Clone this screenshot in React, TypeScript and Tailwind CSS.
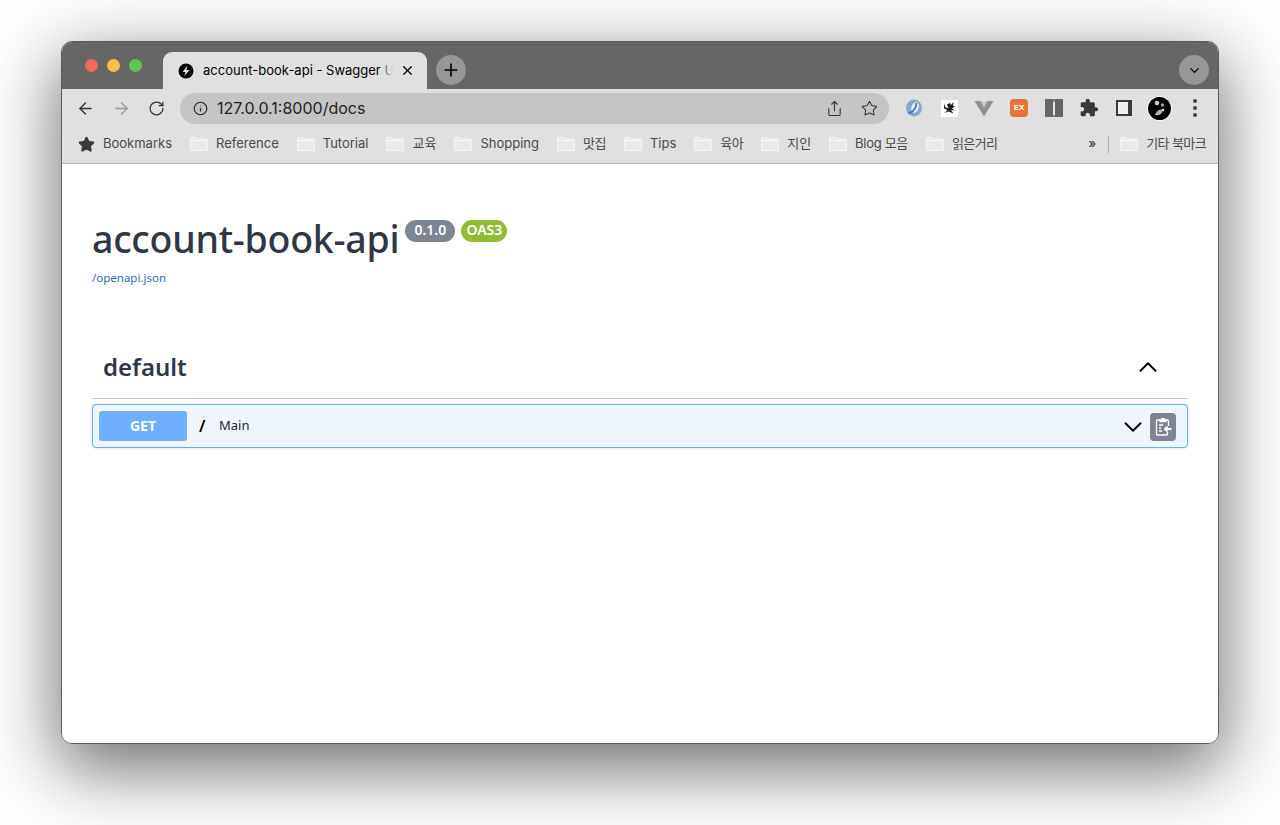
import { ArrowLeft, ArrowRight, ChevronDown, ChevronUp, Info, Plus, RotateCw, Share, Star, X } from "lucide-react"

const bookmarks = [
  { label: "Reference", cls: "" },
  { label: "Tutorial", cls: "" },
  { label: "교육", cls: "" },
  { label: "Shopping", cls: "" },
  { label: "맛집", cls: "tracking-[-0.5px]" },
  { label: "Tips", cls: "" },
  { label: "육아", cls: "tracking-[-0.5px]" },
  { label: "지인", cls: "" },
  { label: "Blog 모음", cls: "tracking-[-0.3px]" },
  { label: "읽은거리", cls: "tracking-[-0.6px]" },
]

function Folder() {
  return (
    <svg width="18" height="14" viewBox="0 0 18 14" className="shrink-0">
      <path d="M.5 12.700V1.300c0-.4.4-.8.8-.8h4.600l1.300 1.500h9.500c.4 0 .8.4.8.8v9.900c0 .4-.4.8-.8.8H1.300c-.4 0-.8-.4-.8-.8z" fill="#e9e9e9" stroke="#f5f5f5" />
      <path d="M1 3.500h16" stroke="#f5f5f5" />
    </svg>
  )
}

function Bookmark({ label, cls }: { label: string; cls?: string }) {
  return (
    <div className="flex items-center gap-2">
      <Folder />
      <span className={cls}>{label}</span>
    </div>
  )
}

function Favicon() {
  return (
    <svg width="16" height="16" viewBox="0 0 16 16" className="shrink-0">
      <circle cx="8" cy="8" r="7.500" fill="#000" />
      <path d="M9.400 2.800 4.600 9h2.800l-1 4.200L11.400 7H8.500z" fill="#e0e0e0" />
    </svg>
  )
}

function Extensions() {
  return (
    <div className="flex items-center gap-[15px] ml-[15px]">
      <svg width="20" height="20" viewBox="0 0 20 20">
        <ellipse cx="10" cy="10" rx="8" ry="8.500" fill="#88a9cf" />
        <ellipse cx="11" cy="9.500" rx="3.500" ry="5.500" fill="#eef2f7" transform="rotate(20 11 9.500)" />
        <path d="M4.500 14.500c3 1 7.500-3 8-9.500" stroke="#3f74b0" strokeWidth="1.800" fill="none" />
      </svg>
      <svg width="20" height="20" viewBox="0 0 20 20">
        <rect x="2" y="2" width="17" height="17" fill="#fff" />
        <path d="M5 5.500l1.500 4 3 .5L8 6.500l3-1.500 1 2 2.500-3-.5 4 2 .5-3 2 3 2-4-.5 2.500 3.500-5-2-4 1.500 3-3-3.500-1.500z" fill="#1f1f1f" />
      </svg>
      <svg width="20" height="20" viewBox="0 0 20 20">
        <path d="M.5 3h6.200L10 8.500 13.300 3h6.200L10 18.500z" fill="#8f8f8f" />
        <path d="M6 3h2.500L10 5.500 11.500 3H14l-4 7z" fill="#c2c2c2" />
      </svg>
      <div className="w-[18px] h-[18px] mx-px rounded-[4px] bg-[#e5733a] text-white text-[8px] font-bold flex items-center justify-center">EX</div>
      <div className="w-[18px] h-[18px] mx-px bg-[#666666] flex items-center justify-center">
        <div className="w-[2px] h-[18px] bg-[#8a8a8a] flex items-center">
          <div className="w-[2px] h-[13px] bg-[#e8e8e8]" />
        </div>
      </div>
      <svg width="20" height="20" viewBox="0 0 24 24" fill="#3a3a3a">
        <path d="M20.500 11H19V7c0-1.100-.9-2-2-2h-4V3.500C13 2.120 11.880 1 10.500 1S8 2.120 8 3.500V5H4c-1.100 0-1.990.9-1.990 2v3.800H3.500c1.490 0 2.700 1.210 2.700 2.700s-1.210 2.700-2.700 2.700H2V20c0 1.100.9 2 2 2h3.800v-1.500c0-1.490 1.210-2.700 2.700-2.700s2.700 1.210 2.700 2.700V22H17c1.100 0 2-.9 2-2v-4h1.500c1.380 0 2.500-1.120 2.500-2.500S21.880 11 20.500 11z" />
      </svg>
      <div className="w-[16px] h-[16px] mx-[2px] border-2 border-r-[4px] border-[#3a3a3a] bg-[#efefef]" />
      <svg width="25" height="25" viewBox="0 0 25 25" className="-mx-[2px]">
        <circle cx="12.500" cy="12.500" r="12.500" fill="#fff" />
        <circle cx="12.500" cy="12.500" r="11.500" fill="#000" />
        <circle cx="10" cy="7" r="2.300" fill="#c9c9c9" />
        <circle cx="15.500" cy="9" r="1.800" fill="#9a9a9a" />
        <path d="M8 19c1-3 3-5 5.500-5.500 1.500 0 2.500 1.500 1.500 3-1 2-4 3.500-7 2.500z" fill="#b5b5b5" />
        <circle cx="16" cy="14" r="1.300" fill="#dddddd" />
      </svg>
      <div className="w-5 flex flex-col items-center gap-[3.500px]">
        <div className="w-[3.500px] h-[3.500px] rounded-full bg-[#444444]" />
        <div className="w-[3.500px] h-[3.500px] rounded-full bg-[#444444]" />
        <div className="w-[3.500px] h-[3.500px] rounded-full bg-[#444444]" />
      </div>
    </div>
  )
}

function Swagger() {
  return (
    <div className="flex-1 bg-white px-[30px] text-[#3b4151] font-['Noto_Sans','Noto_Sans_CJK_KR',sans-serif]">
      <div className="mt-[50px] flex items-start">
        <h1 className="text-[37.500px] leading-[50px] font-medium text-[#2f3646] tracking-[-0.26px]">account-book-api</h1>
        <span className="ml-[6px] mt-[6px] h-[22px] w-[50px] rounded-full bg-[#7d8492] text-white text-[14px] leading-[20px] font-semibold text-center">0.1.0</span>
        <span className="ml-[6px] mt-[6px] h-[22px] w-[46px] rounded-full bg-[#92bb37] text-white text-[14px] leading-[20px] font-semibold text-center">OAS3</span>
      </div>
      <div className="mt-[6px] text-[11.500px] leading-[16px] text-[#2e6bbd]">/openapi.json</div>

      <div className="mt-[51px] h-[62px] border-b border-[#c2c5ca] flex items-center justify-between pl-[11px] pr-[28px]">
        <span className="text-[24px] font-semibold text-[#2f3646] -mt-[2px]">default</span>
        <ChevronUp size={30} strokeWidth={1.500} className="text-black -mr-[3px] -mt-[2px]" />
      </div>
      <div className="mt-[5px] h-[44px] rounded-[4px] border border-[#61affe] bg-[#eff6ff] shadow-[0_0_3px_rgba(0,0,0,0.15)] flex items-center pl-[6px] pr-[11px]">
        <div className="w-[88px] h-[30px] rounded-[3px] bg-[#6fb0fe] text-white text-[14px] font-bold flex items-center justify-center -mt-[1px]">GET</div>
        <span className="ml-[12px] w-[20px] text-[16px] font-semibold text-black -mt-[1px]">/</span>
        <span className="text-[13px] text-[#1f2430] -mt-[1px]">Main</span>
        <ChevronDown size={30} strokeWidth={1.500} className="text-black ml-auto -mr-[1px] mt-[1px]" />
        <div className="ml-[3px] mt-[1px] w-[26px] h-[28px] rounded-[4px] bg-[#7d8492] flex items-center justify-center">
          <svg width="18" height="20" viewBox="0 0 18 20" fill="none" stroke="#fff" strokeWidth="1.300">
            <path d="M6 3H3.500A1 1 0 0 0 2.500 4v13a1 1 0 0 0 1 1h9a1 1 0 0 0 1-1v-2M11 3h2.500a1 1 0 0 1 1 1v5" />
            <path d="M6 4.500V2.800h1.500a1.500 1.500 0 0 1 3 0H12v1.700z" fill="#fff" />
            <path d="M5 8h4M5 11h2M5 14h3" />
            <path d="M17.500 12H11M13.500 9.500 11 12l2.500 2.500" strokeWidth="1.800" />
          </svg>
        </div>
      </div>
    </div>
  )
}

export default function App() {
  return (
    <div className="h-[825px] overflow-hidden bg-white pt-[41px] pl-[61px] font-['Liberation_Sans',sans-serif]">
      <div className="w-[1158px] h-[703px] rounded-[11px] overflow-hidden border border-[#5c5c5c] shadow-[0_22px_70px_4px_rgba(0,0,0,0.56)] flex flex-col">
        {/* Tab strip */}
        <div className="h-[47px] bg-[#666666] flex items-end shrink-0">
          <div className="flex gap-[9px] self-start mt-[17px] ml-[23px]">
            <div className="w-[13px] h-[13px] rounded-full bg-[#ed6a5e]" />
            <div className="w-[13px] h-[13px] rounded-full bg-[#f5bf4f]" />
            <div className="w-[13px] h-[13px] rounded-full bg-[#61c554]" />
          </div>
          <div className="ml-[21px] w-[264px] h-[37px] rounded-t-[9px] bg-[#e0e0e0] flex items-center pl-[15px] pr-[12px] text-[13px] text-black font-['Inter',sans-serif]">
            <Favicon />
            <div className="relative ml-[9px] w-[190px] overflow-hidden whitespace-nowrap">
              account-book-api - Swagger UI
              <div className="absolute inset-y-0 right-0 w-[14px] bg-gradient-to-r from-transparent to-[#e0e0e0]" />
            </div>
            <X size={15} strokeWidth={2} className="ml-auto" />
          </div>
          <div className="ml-[9px] mb-[4px] w-[30px] h-[30px] rounded-full bg-[#969696] flex items-center justify-center">
            <Plus size={20} strokeWidth={2} className="text-black" />
          </div>
          <div className="ml-auto mr-[9px] mb-[4px] w-[30px] h-[30px] rounded-full bg-[#969696] flex items-center justify-center">
            <ChevronDown size={15} strokeWidth={2} className="text-black" />
          </div>
        </div>

        {/* Toolbar */}
        <div className="h-[38px] bg-[#e0e0e0] flex items-center shrink-0">
          <ArrowLeft size={19} strokeWidth={1.800} className="ml-[14px] text-[#333333]" />
          <ArrowRight size={19} strokeWidth={1.800} className="ml-[17px] text-[#9a9a9a]" />
          <RotateCw size={17} strokeWidth={1.800} className="ml-[17px] text-[#333333]" />
          <div className="ml-[15px] w-[709px] h-[31px] rounded-full bg-[#c4c4c4] flex items-center pl-[13px] pr-[11px] text-[#222222]">
            <Info size={15} strokeWidth={1.800} />
            <span className="ml-[9px] text-[16px] font-['Inter',sans-serif]">127.0.0.1:8000/docs</span>
            <Share size={17} strokeWidth={1.500} className="ml-auto text-[#333333]" />
            <Star size={17} strokeWidth={1.500} className="ml-[18px] text-[#333333]" />
          </div>
          <Extensions />
        </div>

        {/* Bookmarks */}
        <div className="h-[37px] bg-[#e0e0e0] border-b border-[#b9b9b9] flex items-center shrink-0 pl-[16px] pr-[12px] pb-[2px] text-[13px] text-[#4a4a4a] font-['Inter','Noto_Sans_CJK_KR',sans-serif]">
          <div className="flex items-center gap-2 mr-[18px]">
            <Star size={17} fill="#3c3c3c" stroke="#3c3c3c" />
            <span>Bookmarks</span>
          </div>
          <div className="flex items-center gap-[18px]">
            {bookmarks.map((b) => (
              <Bookmark key={b.label} label={b.label} cls={b.cls} />
            ))}
          </div>
          <span className="ml-auto text-[#222222]">»</span>
          <div className="ml-[12px] mr-[11px] w-px h-[17px] bg-[#b0b0b0]" />
          <Bookmark label="기타 북마크" cls="tracking-[-0.6px]" />
        </div>

        <Swagger />
      </div>
    </div>
  )
}
